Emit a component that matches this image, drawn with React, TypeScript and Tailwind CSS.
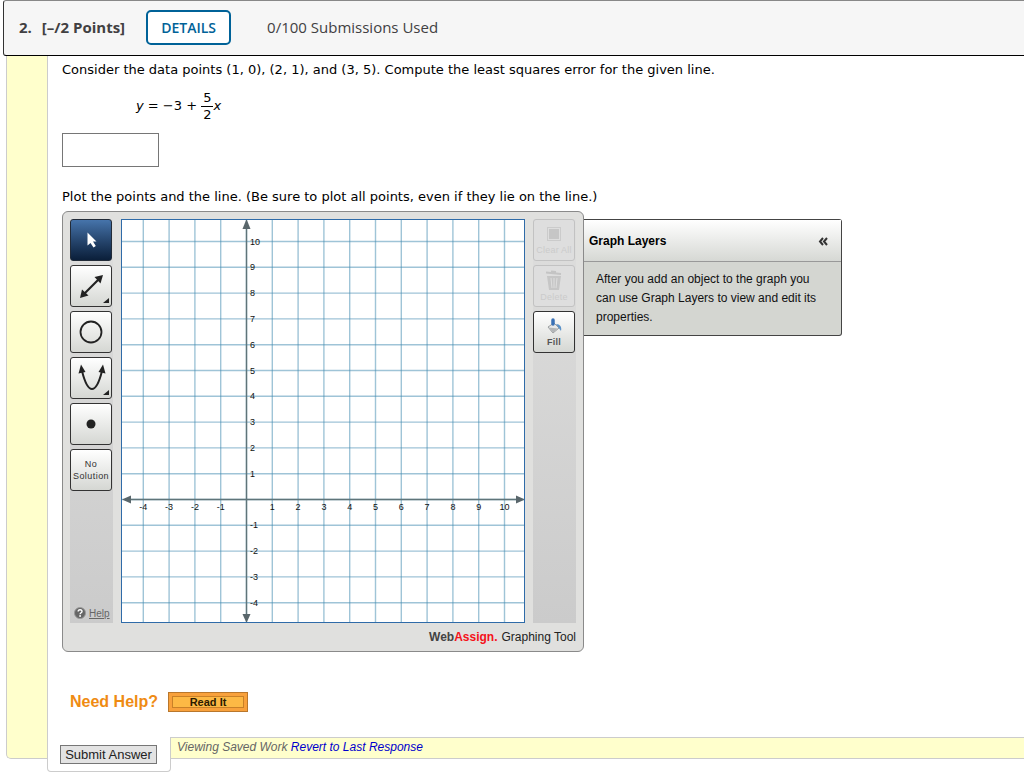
import type { ReactNode } from 'react';

const GRAPH_SIZE = 404;
const UNIT = 25.8;
const ORIGIN = { x: 125.5, y: 280.5 };

const ticks = Array.from({ length: 15 }, (_, i) => i - 4);
const labels = ticks.filter(n => n !== 0);

const toX = (n: number) => ORIGIN.x + n * UNIT;
const toY = (n: number) => ORIGIN.y - n * UNIT;

type ToolProps = {
  label: string;
  active?: boolean;
  disabled?: boolean;
  children: ReactNode;
};

const ToolButton = ({ label, active, disabled, children }: ToolProps) => {
  let look = 'border-[#333333] bg-linear-to-b from-white to-[#d5d7d3]';
  if (active) look = 'border-[#222b38] bg-linear-to-b from-[#4674ab] to-[#0b1f3a]';
  if (disabled) look = 'border-[#c2c2c2] bg-[#dedede] text-[#cbcbcb]';

  return (
    <button
      type="button"
      aria-label={label}
      disabled={disabled}
      className={`flex h-[42px] w-full flex-col items-center justify-center rounded-[3px] border ${look}`}
    >
      {children}
    </button>
  );
};

// small triangle on tools that open a submenu
const Corner = () => <path d="M38 37V32L32 37Z" fill="#222" />;

const Graph = () => (
  <svg
    width={GRAPH_SIZE}
    height={GRAPH_SIZE}
    viewBox="0 0 404 404"
    role="img"
    aria-label="Coordinate grid"
    className="shrink-0 bg-white"
    fontFamily="Liberation Sans, Arial, sans-serif"
    fontSize="9"
    fill="#111"
  >
    <g stroke="#3f8ab0" strokeOpacity="0.5" strokeWidth="1.4">
      {ticks.map(n => (
        <g key={n}>
          <line x1={toX(n)} y1="0" x2={toX(n)} y2="404" />
          <line x1="0" y1={toY(n)} x2="404" y2={toY(n)} />
        </g>
      ))}
    </g>
    <g stroke="#5f7479" strokeWidth="1.4">
      <line x1={ORIGIN.x} y1="4" x2={ORIGIN.x} y2="400" />
      <line x1="4" y1={ORIGIN.y} x2="400" y2={ORIGIN.y} />
    </g>
    <g fill="#59666b">
      <path d="M125.5 0L129.5 10H121.5Z" />
      <path d="M125.5 404L129.5 395H121.5Z" />
      <path d="M1 280.5L10 276.5V284.5Z" />
      <path d="M404 280.5L395 276.5V284.5Z" />
    </g>
    {labels.map(n => (
      <g key={n}>
        <text x={toX(n)} y="291" textAnchor="middle">{n}</text>
        <text x="129" y={toY(n) + 3}>{n}</text>
      </g>
    ))}
    <rect x="0.5" y="0.5" width="403" height="403" fill="none" stroke="#2f6ba8" />
  </svg>
);

const LeftTools = () => (
  <div className="flex w-[43px] shrink-0 flex-col gap-1 bg-linear-to-b from-[#dededd] to-[#cbcbcb] pr-px">
    <ToolButton label="Select" active>
      <svg width="40" height="40" viewBox="0 0 40 40">
        <path d="M16.5 12.5V25.5L19.5 23L22.5 27.5L24.8 26L22 21.5H25.5Z" fill="#fff" />
      </svg>
    </ToolButton>
    <ToolButton label="Line">
      <svg width="40" height="40" viewBox="0 0 40 40">
        <path d="M13 28L28 13" stroke="#222" strokeWidth="2.2" />
        <path d="M32 9L23.5 11L29.5 17.5Z" fill="#222" />
        <path d="M9 32L11 23.5L17.5 29.5Z" fill="#222" />
        <Corner />
      </svg>
    </ToolButton>
    <ToolButton label="Circle">
      <svg width="40" height="40" viewBox="0 0 40 40">
        <circle cx="20" cy="20" r="10.5" fill="none" stroke="#222" strokeWidth="1.8" />
      </svg>
    </ToolButton>
    <ToolButton label="Parabola">
      <svg width="40" height="40" viewBox="0 0 40 40">
        <path d="M11 13C14 25 17 31 21 31C25 31 28 25 31 13" fill="none" stroke="#222" strokeWidth="2" />
        <path d="M10 6.5L7.5 15.5L14.5 14Z" fill="#222" />
        <path d="M32 6.5L27.5 14L34.5 15.5Z" fill="#222" />
        <Corner />
      </svg>
    </ToolButton>
    <ToolButton label="Point">
      <svg width="40" height="40" viewBox="0 0 40 40">
        <circle cx="20" cy="20" r="4.5" fill="#222" />
      </svg>
    </ToolButton>
    <ToolButton label="No Solution">
      <span className="text-center text-[9px] leading-3 tracking-wider text-[#333]">
        No
        <br />
        Solution
      </span>
    </ToolButton>
    <a href="#help" className="mt-auto flex h-5 items-center gap-[3px] pl-1 text-[10px] text-[#666]">
      <svg width="12" height="12" viewBox="0 0 13 13">
        <circle cx="6.5" cy="6.5" r="6" fill="#666" stroke="#999" />
        <path d="M4.5 5C4.5 2.3 8.700 2.3 8.700 4.800C8.700 6.2 6.6 6.2 6.6 7.800" fill="none" stroke="#fff" strokeWidth="1.5" />
        <circle cx="6.6" cy="9.8" r="1" fill="#fff" />
      </svg>
      <span className="underline">Help</span>
    </a>
  </div>
);

const RightTools = () => (
  <div className="flex w-[43px] shrink-0 flex-col gap-1 bg-linear-to-b from-[#dededd] to-[#cbcbcb] pr-px text-[9px] leading-3 tracking-wide">
    <ToolButton label="Clear All" disabled>
      <svg width="20" height="19" viewBox="0 0 20 19">
        <rect x="3.5" y="2.5" width="13" height="13" fill="none" stroke="#cbcbcb" />
        <rect x="5" y="4" width="10" height="10" fill="#c6c6c6" />
      </svg>
      <span className="whitespace-nowrap">Clear All</span>
    </ToolButton>
    <ToolButton label="Delete" disabled>
      <svg width="20" height="22" viewBox="0 0 20 22">
        <path d="M2 3.5L17 5M7 2.5L12 3" stroke="#c4c4c4" strokeWidth="2" />
        <path d="M3 7H17L15 21H5Z" fill="#c6c6c6" />
        <path d="M7 9L8 19M10 9V19M13 9L12 19" stroke="#dedede" />
      </svg>
      <span>Delete</span>
    </ToolButton>
    <ToolButton label="Fill">
      <svg width="20" height="20" viewBox="0 0 20 20">
        <path d="M4 11L10 7L15 12L9 17Z" fill="#e8e9e9" stroke="#9a9d9f" />
        <path d="M4.5 11.5L9 16.5L14 12.5Z" fill="#b3b6b8" />
        <path d="M9 4V8" stroke="#3971b6" strokeWidth="3.5" strokeLinecap="round" />
        <path d="M12 8C16 8 18 11 17 15L14 11Z" fill="#5b92c9" />
      </svg>
      <span className="font-bold text-[#555]">Fill</span>
    </ToolButton>
  </div>
);

const GraphingTool = () => (
  <div className="flex items-start font-['Liberation_Sans',Arial,sans-serif]">
    <div className="shrink-0 rounded-md border border-[#8a8a8a] bg-[#e0e0de] p-[7px] pb-0">
      <div className="flex gap-2">
        <LeftTools />
        <Graph />
        <RightTools />
      </div>
      <div className="flex h-7 items-center justify-end text-[12px] text-[#222]">
        <span className="font-bold text-[#444]">Web</span>
        <span className="font-bold text-[#f5121a]">Assign.</span>
        <span className="ml-1">Graphing Tool</span>
      </div>
    </div>

    <section className="mt-2 w-[258px] rounded-r-[3px] border border-l-0 border-[#444] bg-[#d4d6d1]">
      <header className="flex h-[42px] items-center justify-between border-b border-[#999] bg-linear-to-b from-white to-[#d6d8d4] pr-3 pl-[5px]">
        <h2 className="text-[12px] font-bold text-black">Graph Layers</h2>
        <button type="button" aria-label="Collapse layers">
          <svg width="12" height="10" viewBox="0 0 12 10" fill="none" stroke="#333" strokeWidth="2">
            <path d="M6 2L3 5.5L6 9M10 2L7 5.5L10 9" />
          </svg>
        </button>
      </header>
      <p className="py-2 pr-3 pl-3 text-[12px] leading-[19px] text-[#111]">
        After you add an object to the graph you can use Graph Layers to view and edit its properties.
      </p>
    </section>
  </div>
);

const Equation = () => (
  <div className="mt-[10px] ml-[74px] flex h-8 items-center text-[13px]">
    <span className="whitespace-pre">
      <i>y</i> = −3 +{' '}
    </span>
    <span className="flex flex-col text-center leading-4">
      <span className="border-b border-black px-[2px]">5</span>
      <span>2</span>
    </span>
    <i>x</i>
  </div>
);

const App = () => {
  return (
    <div className="overflow-x-hidden bg-white font-[Verdana,'DejaVu_Sans',sans-serif] text-black">
      <header className="ml-[3px] flex h-14 items-center rounded-l-[3px] border border-r-0 border-t-[#888] border-b-black border-l-[#333] bg-[#f6f6f6] pb-px pl-[15px] font-['Open_Sans',sans-serif] text-[15px] text-[#414042]">
        <h1 className="flex gap-[10px] font-bold">
          <span>2.</span>
          <span>[–/2 Points]</span>
        </h1>
        <button
          type="button"
          className="ml-[21px] h-[35px] w-[85px] rounded-[5px] border-2 border-[#006298] bg-white text-[14px] font-semibold text-[#006298]"
        >
          DETAILS
        </button>
        <span className="ml-9">0/100 Submissions Used</span>
      </header>

      <main className="ml-[6px] flex">
        <div className="mb-[13px] w-[41px] shrink-0 rounded-bl-[5px] border-b border-l border-[#ccc] bg-[#ffffcc]" />

        <div className="min-w-0 flex-1">
          <div className="border-l border-[#ccc] pt-1 pb-[25px] pl-[14px]">
            <label htmlFor="answer" className="block text-[13px] leading-5">
              Consider the data points (1, 0), (2, 1), and (3, 5). Compute the least squares error for the given line.
            </label>
            <Equation />
            <input
              id="answer"
              type="text"
              className="mt-[11px] block h-[34px] w-[97px] border border-[#767676] bg-white px-2 text-[13px]"
            />
            <p className="mt-5 mb-1 text-[13px] leading-5">
              Plot the points and the line. (Be sure to plot all points, even if they lie on the line.)
            </p>
            <GraphingTool />

            <div className="mt-10 flex items-center gap-[10px] pl-2 font-['Liberation_Sans',Arial,sans-serif]">
              <span className="text-[16px] leading-5 font-bold text-[#ef8b13]">Need Help?</span>
              <button
                type="button"
                className="h-5 w-20 border border-[#b9772c] bg-[#f8a13c] p-[3px] text-[11px] font-bold text-[#2b1a00]"
              >
                <span className="flex h-3 items-center justify-center border border-[#c98128] bg-[#fdb945]">
                  Read It
                </span>
              </button>
            </div>
          </div>

          <footer className="flex items-start font-['Liberation_Sans',Arial,sans-serif]">
            <div className="h-[35px] w-[124px] shrink-0 rounded-b-[4px] border border-t-0 border-[#ccc] pt-2 pl-3">
              <button
                type="button"
                className="block h-[19px] w-[97px] border border-[#767676] bg-[#e3e3e3] text-[13px] leading-4 text-[#222]"
              >
                Submit Answer
              </button>
            </div>
            <div className="-ml-px h-[22px] flex-1 border border-r-0 border-[#ccc] bg-[#ffffcc] pl-[6px] text-[12px] leading-[18px] text-[#666] italic">
              Viewing Saved Work{' '}
              <a href="#revert" className="text-[#0000cc]">
                Revert to Last Response
              </a>
            </div>
          </footer>
        </div>
      </main>
    </div>
  );
};

export default App;
